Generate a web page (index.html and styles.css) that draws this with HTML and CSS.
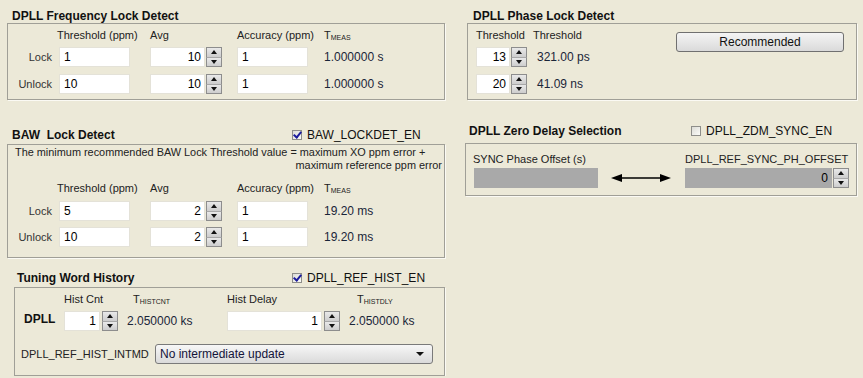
FILE: index.html
```html
<!DOCTYPE html>
<html lang="en">
	<head>
		<meta charset="UTF-8" />
		<title>DPLL Lock Detect</title>
		<link rel="stylesheet" href="styles.css">
	</head>
	<body>
		<div class="page">
			<div class="col-left">
				<div class="head head-freq">
					<span class="title">DPLL Frequency Lock Detect</span>
				</div>
				<div class="panel">
					<div class="lock-grid freq-grid">
						<div></div>
						<div class="hdr hdr-thr">Threshold (ppm)</div>
						<div class="hdr">Avg</div>
						<div class="hdr">Accuracy (ppm)</div>
						<div class="hdr tsub">T<sub>MEAS</sub></div>

						<div class="lbl">Lock</div>
						<input class="field wide" type="text" value="1">
						<div class="spinbox">
							<input class="field num avg" type="text" value="10">
							<span class="spin"><span class="up"></span><span class="down"></span></span>
						</div>
						<input class="field wide" type="text" value="1">
						<div class="val">1.000000 s</div>

						<div class="lbl">Unlock</div>
						<input class="field wide" type="text" value="10">
						<div class="spinbox">
							<input class="field num avg" type="text" value="10">
							<span class="spin"><span class="up"></span><span class="down"></span></span>
						</div>
						<input class="field wide" type="text" value="1">
						<div class="val">1.000000 s</div>
					</div>
				</div>

				<div class="head head-baw">
					<span class="title">BAW&nbsp; Lock Detect</span>
					<label class="check"><span class="box on"></span>BAW_LOCKDET_EN</label>
				</div>
				<div class="panel">
					<div class="note">
						<div class="note-1">The minimum recommended BAW Lock Threshold value = maximum XO ppm error +</div>
						<div class="note-2">maximum reference ppm error</div>
					</div>
					<div class="lock-grid baw-grid">
						<div></div>
						<div class="hdr hdr-thr">Threshold (ppm)</div>
						<div class="hdr">Avg</div>
						<div class="hdr">Accuracy (ppm)</div>
						<div class="hdr tsub">T<sub>MEAS</sub></div>

						<div class="lbl">Lock</div>
						<input class="field wide" type="text" value="5">
						<div class="spinbox">
							<input class="field num avg" type="text" value="2">
							<span class="spin"><span class="up"></span><span class="down"></span></span>
						</div>
						<input class="field wide" type="text" value="1">
						<div class="val">19.20 ms</div>

						<div class="lbl">Unlock</div>
						<input class="field wide" type="text" value="10">
						<div class="spinbox">
							<input class="field num avg" type="text" value="2">
							<span class="spin"><span class="up"></span><span class="down"></span></span>
						</div>
						<input class="field wide" type="text" value="1">
						<div class="val">19.20 ms</div>
					</div>
				</div>

				<div class="head head-hist">
					<span class="title">Tuning Word History</span>
					<label class="check"><span class="box on"></span>DPLL_REF_HIST_EN</label>
				</div>
				<div class="panel panel-hist">
					<div class="hist-grid">
						<div></div>
						<div class="hdr">Hist Cnt</div>
						<div class="hdr tsub t-cnt">T<sub>HISTCNT</sub></div>
						<div class="hdr">Hist Delay</div>
						<div class="hdr tsub t-dly">T<sub>HISTDLY</sub></div>

						<div class="dpll">DPLL</div>
						<div class="spinbox">
							<input class="field num cnt" type="text" value="1">
							<span class="spin gap"><span class="up"></span><span class="down"></span></span>
						</div>
						<div class="val">2.050000 ks</div>
						<div class="spinbox">
							<input class="field num dly" type="text" value="1">
							<span class="spin gap"><span class="up"></span><span class="down"></span></span>
						</div>
						<div class="val">2.050000 ks</div>
					</div>
					<div class="intmd">
						<span class="intmd-lbl">DPLL_REF_HIST_INTMD</span>
						<div class="select">
							<span>No intermediate update</span>
							<span class="caret"></span>
						</div>
					</div>
				</div>
			</div>

			<div class="col-right">
				<div class="head head-phase">
					<span class="title">DPLL Phase Lock Detect</span>
				</div>
				<div class="panel panel-phase">
					<div class="phase-grid">
						<div class="hdr ph-in">Threshold</div>
						<div class="hdr">Threshold</div>

						<div class="spinbox ph-in">
							<input class="field num ph" type="text" value="13">
							<span class="spin"><span class="up"></span><span class="down"></span></span>
						</div>
						<div class="val ph-val">321.00 ps</div>

						<div class="spinbox ph-in">
							<input class="field num ph" type="text" value="20">
							<span class="spin"><span class="up"></span><span class="down"></span></span>
						</div>
						<div class="val ph-val">41.09 ns</div>
					</div>
					<button class="btn" type="button">Recommended</button>
				</div>

				<div class="head head-zdm">
					<span class="title">DPLL Zero Delay Selection</span>
					<label class="check check-zdm"><span class="box"></span>DPLL_ZDM_SYNC_EN</label>
				</div>
				<div class="panel panel-zdm">
					<div class="zdm-left">
						<div class="zdm-lbl">SYNC Phase Offset (s)</div>
						<div class="grey-field"></div>
					</div>
					<svg class="arrow" width="60" height="10" viewBox="0 0 60 10">
						<line x1="6" y1="5" x2="54" y2="5" stroke="#000" stroke-width="1.5" />
						<polygon points="0,5 11,1 11,9" fill="#000" />
						<polygon points="60,5 49,1 49,9" fill="#000" />
					</svg>
					<div class="zdm-right">
						<div class="zdm-lbl">DPLL_REF_SYNC_PH_OFFSET</div>
						<div class="spinbox">
							<input class="field num grey offs" type="text" value="0">
							<span class="spin"><span class="up"></span><span class="down"></span></span>
						</div>
					</div>
				</div>
			</div>
		</div>
	</body>
</html>
```
FILE: styles.css
```css
* {
	box-sizing: border-box;
}
body {
	margin: 0;
	background-color: #ece9d8;
	font-family: "Liberation Sans", Arial, sans-serif;
	font-size: 11px;
	color: #222;
}
.page {
	display: flex;
	padding-left: 7px;
}
.col-left {
	width: 438px;
}
.col-right {
	width: 392px;
	margin-left: 20px;
}

/* section heads */
.head {
	display: flex;
	align-items: center;
	height: 16px;
}
.title {
	font-weight: bold;
	font-size: 12px;
	color: #111;
}
.head-freq {
	margin-top: 8px;
	height: 15px;
	padding-left: 5px;
}
.head-baw {
	margin-top: 27px;
	margin-bottom: 1px;
	padding-left: 5px;
}
.head-hist {
	margin-top: 12px;
	margin-bottom: 1px;
	padding-left: 10px;
}
.head-phase {
	margin-top: 8px;
	height: 15px;
	padding-left: 8px;
}
.head-zdm {
	margin-top: 23px;
	margin-bottom: 4px;
	padding-left: 4px;
}
.check {
	display: flex;
	align-items: center;
	margin-left: auto;
	width: 153px;
	font-size: 12px;
	color: #111;
}
.check-zdm {
	width: 166px;
}
.box {
	width: 10px;
	height: 10px;
	margin-right: 5px;
	border: 1px solid #8e8e8a;
	background: linear-gradient(135deg, #dcdcd6, #fbfbf8);
	display: flex;
	align-items: center;
	justify-content: center;
}
.box.on::after {
	content: "";
	width: 3px;
	height: 6px;
	margin-top: -2px;
	border-right: 2px solid #1c1c9c;
	border-bottom: 2px solid #1c1c9c;
	transform: rotate(40deg);
}

/* group box */
.panel {
	border: 1px solid #a09f97;
	box-shadow: 1px 1px 0 #fbfaf4;
}

/* inputs and spinners */
.field {
	display: block;
	height: 20px;
	margin: 0;
	padding: 0 4px;
	border: 1px solid #e4e2d8;
	background: #fff;
	font-family: "Liberation Sans", Arial, sans-serif;
	font-size: 12px;
	color: #000;
}
.field.num {
	text-align: right;
	padding-right: 3px;
}
.field.wide {
	width: 71px;
}
.field.avg {
	width: 55px;
}
.spinbox {
	display: flex;
}
.spin {
	display: flex;
	flex-direction: column;
	width: 16px;
	height: 20px;
	margin-left: 1px;
}
.spin.gap {
	margin-left: 2px;
}
.spin span {
	flex: 1;
	display: flex;
	align-items: center;
	justify-content: center;
	border: 1px solid #8d8d8d;
	background: linear-gradient(#e9e9e9, #cdcdcd);
}
.spin span + span {
	border-top: 1px solid #a8a8a8;
}
.spin .up {
	border-bottom: none;
}
.spin .up::after {
	content: "";
	border-left: 3px solid transparent;
	border-right: 3px solid transparent;
	border-bottom: 4px solid #111;
}
.spin .down::after {
	content: "";
	border-left: 3px solid transparent;
	border-right: 3px solid transparent;
	border-top: 4px solid #111;
}

.hdr {
	line-height: 13px;
	color: #222;
}
.tsub {
	font-size: 11px;
}
.tsub sub {
	font-size: 7px;
	vertical-align: -1px;
}
.lbl {
	line-height: 20px;
	text-align: right;
	padding-right: 7px;
	color: #333;
}
.val {
	line-height: 20px;
	font-size: 12px;
	color: #1a2538;
}

/* lock detect grids */
.lock-grid {
	display: grid;
	grid-template-columns: 51px 91px 87px 87px 1fr;
	align-items: start;
}
.hdr-thr {
	margin-left: -2px;
}
.freq-grid {
	grid-template-rows: 23px 27px 20px;
	padding-bottom: 5px;
}
.freq-grid .hdr {
	padding-top: 5px;
}
.baw-grid {
	grid-template-rows: 29px 26px 20px;
	padding-bottom: 10px;
}
.baw-grid .hdr {
	padding-top: 10px;
}
.note {
	padding-top: 1px;
	font-size: 10.9px;
	line-height: 13px;
	color: #222;
	white-space: nowrap;
}
.note-1 {
	padding-left: 7px;
}
.note-2 {
	text-align: right;
	padding-right: 2px;
}

/* tuning word history */
.panel-hist {
	margin-left: 7px;
	padding-bottom: 11px;
}
.hist-grid {
	display: grid;
	grid-template-columns: 49px 63px 100px 122px 1fr;
	grid-template-rows: 23px 20px;
	align-items: start;
}
.hist-grid .hdr {
	padding-top: 5px;
}
.t-cnt {
	padding-left: 6px;
}
.t-dly {
	padding-left: 8px;
}
.dpll {
	padding-left: 9px;
	font-weight: bold;
	font-size: 12px;
	line-height: 16px;
	color: #111;
}
.field.cnt {
	width: 36px;
}
.field.dly {
	width: 95px;
}
.intmd {
	display: flex;
	align-items: center;
	margin-top: 13px;
}
.intmd-lbl {
	width: 140px;
	padding-left: 6px;
	color: #222;
}
.select {
	display: flex;
	align-items: center;
	justify-content: space-between;
	width: 278px;
	height: 20px;
	padding: 0 8px 0 4px;
	border: 1px solid #7a7a7a;
	border-radius: 3px;
	background: linear-gradient(#f7f7f7, #dadada);
	font-size: 12px;
	color: #14143a;
}
.caret {
	border-left: 4px solid transparent;
	border-right: 4px solid transparent;
	border-top: 4px solid #111;
}

/* phase lock detect */
.panel-phase {
	display: flex;
	align-items: flex-start;
	height: 77px;
	margin-left: 2px;
}
.phase-grid {
	display: grid;
	grid-template-columns: 65px 90px;
	grid-template-rows: 23px 27px 20px;
	align-items: start;
}
.phase-grid .hdr {
	padding-top: 5px;
}
.ph-in {
	padding-left: 8px;
}
.field.ph {
	width: 34px;
}
.ph-val {
	padding-left: 4px;
}
.btn {
	width: 168px;
	height: 20px;
	margin: 8px 12px 0 auto;
	padding: 0;
	border: 1px solid #707070;
	border-radius: 3px;
	background: linear-gradient(#f4f4f4, #dadada);
	font-family: "Liberation Sans", Arial, sans-serif;
	font-size: 12px;
	color: #111;
}

/* zero delay */
.panel-zdm {
	display: flex;
	align-items: flex-end;
	height: 53px;
	padding: 9px 0 7px 8px;
}
.zdm-lbl {
	line-height: 13px;
	margin-bottom: 2px;
	color: #222;
}
.zdm-left .zdm-lbl {
	margin-left: -1px;
}
.grey-field {
	width: 124px;
	height: 20px;
	background: #a9a9a9;
}
.arrow {
	margin: 0 14px 5px 13px;
}
.field.grey {
	background: #a9a9a9;
	border-color: #a9a9a9;
}
.field.offs {
	width: 147px;
}
```
